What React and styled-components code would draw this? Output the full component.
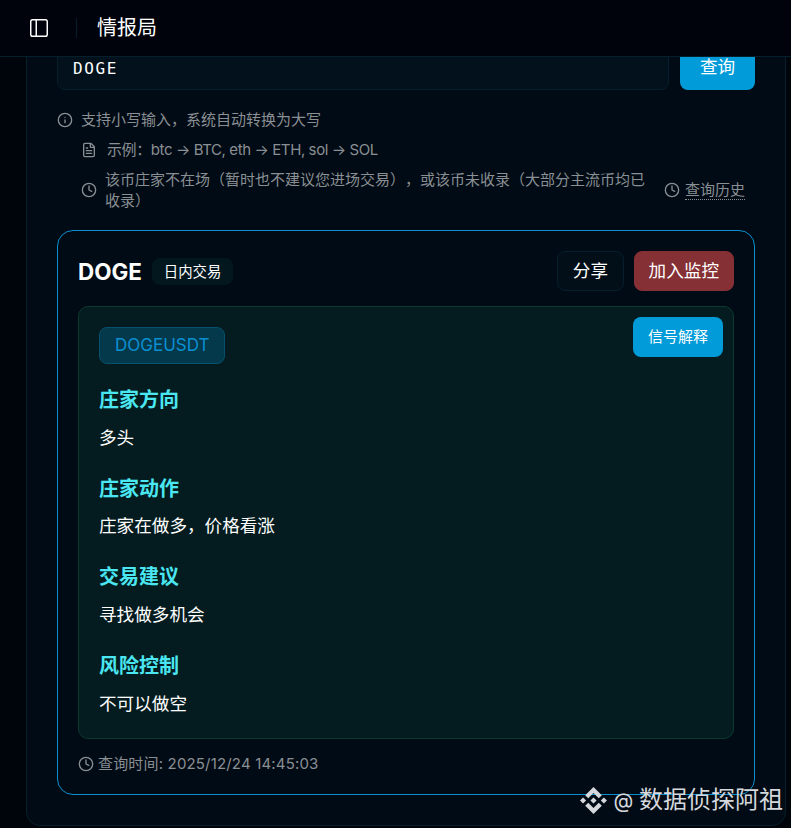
import React from "react";
import styled, { createGlobalStyle } from "styled-components";
import { Info, FileText, Clock, PanelLeft } from "lucide-react";

const GlobalStyle = createGlobalStyle`
  html, body {
    margin: 0;
    height: 100%;
    overflow: hidden;
    background: #00040b;
  }
  * {
    box-sizing: border-box;
  }
  body {
    font-family: Inter, "Noto Sans CJK SC", "Liberation Sans", sans-serif;
    color: #fff;
  }
`;

const Page = styled.div`
  position: relative;
  width: 791px;
  height: 828px;
  overflow: hidden;
`;

const Header = styled.header`
  position: relative;
  z-index: 2;
  display: flex;
  align-items: center;
  height: 57px;
  padding-left: 28px;
  background: #00030c;
  border-bottom: 1px solid #05202c;
`;

const Divider = styled.div`
  width: 1px;
  height: 20px;
  margin: 0 20px 0 26px;
  background: #05202c;
`;

const Title = styled.h1`
  margin: 0;
  font-size: 20px;
  font-weight: 400;
  line-height: 26px;
`;

const Main = styled.main`
  margin: -12px 5px 0 26px;
  height: 781px;
  padding: 0 30px;
  background: #010b15;
  border: 1px solid #05202c;
  border-radius: 0 0 14px 14px;
`;

const SearchRow = styled.div`
  display: flex;
  gap: 11px;
  height: 44px;
`;

const SearchInput = styled.div`
  flex: 1;
  padding-left: 15px;
  line-height: 43px;
  font-family: "DejaVu Sans Mono", "Liberation Mono", monospace;
  font-size: 16px;
  letter-spacing: 1.6px;
  background: #02111c;
  border: 1px solid #05202c;
  border-radius: 8px;
`;

const SearchButton = styled.div`
  width: 75px;
  text-align: center;
  line-height: 42px;
  font-size: 17.6px;
  background: #009bd8;
  border-radius: 8px;
`;

const Hint = styled.div`
  display: flex;
  align-items: center;
  gap: ${(p) => p.$gap || 8}px;
  margin-top: ${(p) => p.$top || 0}px;
  padding-left: ${(p) => p.$indent || 0}px;
  color: #8a8f93;
  font-size: 15px;
  line-height: 21px;
  letter-spacing: ${(p) => p.$tight || 0}px;
  text-spacing-trim: space-all;
  svg {
    flex: none;
  }
`;

const HintText = styled.span`
  width: ${(p) => (p.$wide ? "546px" : "auto")};
`;

const HistoryLink = styled.span`
  display: flex;
  align-items: center;
  gap: 5px;
  margin-left: 5px;
  white-space: nowrap;
  span {
    border-bottom: 1px dotted #8a8f93;
    line-height: 18px;
  }
`;

const ResultCard = styled.section`
  margin-top: 19px;
  height: 565px;
  padding: 20px 20px 0;
  background: #010b15;
  border: 1px solid #0a8fcf;
  border-radius: 16px;
`;

const CardTop = styled.div`
  display: flex;
  align-items: center;
  height: 40px;
`;

const Symbol = styled.h2`
  margin: 0 10px 0 0;
  font-size: 22.4px;
  font-weight: 700;
`;

const Tag = styled.span`
  padding: 0 12px;
  font-size: 14.4px;
  line-height: 27px;
  background: #03171f;
  border-radius: 8px;
`;

const Actions = styled.div`
  display: flex;
  gap: 10px;
  margin-left: auto;
`;

const ActionButton = styled.div`
  height: 40px;
  padding: 0 ${(p) => (p.$danger ? 14 : 14.6)}px;
  line-height: 38px;
  font-size: 17.6px;
  background: ${(p) => (p.$danger ? "#853034" : "#020f18")};
  border: 1px solid ${(p) => (p.$danger ? "#853034" : "#05202c")};
  border-radius: 8px;
`;

const SignalPanel = styled.div`
  position: relative;
  margin-top: 15px;
  height: 433px;
  padding: 20px;
  background: #041c1f;
  border: 1px solid #0b3a2d;
  border-radius: 10px;
`;

const ExplainButton = styled.div`
  position: absolute;
  top: 10px;
  right: 10px;
  width: 90px;
  height: 40px;
  text-align: center;
  line-height: 40px;
  font-size: 15px;
  background: #009bd8;
  border-radius: 8px;
`;

const Pair = styled.span`
  display: inline-block;
  height: 37px;
  padding: 0 15px;
  line-height: 35px;
  font-size: 17px;
  color: #0a8fd2;
  background: #03394b;
  border: 1px solid #07506e;
  border-radius: 8px;
`;

const Section = styled.div`
  margin-top: ${(p) => (p.$first ? 23 : 26.2)}px;
`;

const SectionTitle = styled.h3`
  margin: 0;
  font-size: 20px;
  font-weight: 700;
  line-height: 26px;
  color: #4ae6f1;
`;

const SectionBody = styled.p`
  margin: 11.5px 0 0;
  font-size: 17.6px;
  line-height: 25px;
`;

const QueryTime = styled.div`
  display: flex;
  align-items: center;
  gap: 4px;
  margin-top: 15px;
  color: #8a8f93;
  font-size: 15px;
  letter-spacing: 0.17px;
  line-height: 20px;
`;

const Watermark = styled.div`
  position: absolute;
  right: 8px;
  bottom: 13px;
  z-index: 3;
  display: flex;
  align-items: center;
  gap: 6px;
  color: #d5d8dc;
  font-size: 24px;
  line-height: 28px;
  white-space: nowrap;
`;

const AtSign = styled.span`
  font-size: 20.5px;
`;

const sections = [
  { title: "庄家方向", body: "多头" },
  { title: "庄家动作", body: "庄家在做多，价格看涨" },
  { title: "交易建议", body: "寻找做多机会" },
  { title: "风险控制", body: "不可以做空" },
];

function BinanceMark() {
  return (
    <svg width="27" height="27" viewBox="0 0 126.61 126.61" fill="#d5d8dc">
      <path d="M38.73 53.2l24.59-24.58 24.6 24.6 14.3-14.31L63.32 0 24.43 38.89zM0 63.31l14.3-14.31 14.31 14.31-14.31 14.3zm38.73 10.11l24.59 24.59 24.6-24.6 14.31 14.29-38.9 38.91-38.91-38.88zm59-10.11l14.3-14.31 14.31 14.31-14.31 14.3zM77.83 63.3L63.32 48.78 52.59 59.51l-1.24 1.23-2.54 2.54 14.51 14.5 14.51-14.47z" />
    </svg>
  );
}

export default function App() {
  return (
    <Page>
      <GlobalStyle />
      <Header>
        <PanelLeft size={22} strokeWidth={1.6} />
        <Divider />
        <Title>情报局</Title>
      </Header>
      <Main>
        <SearchRow>
          <SearchInput>DOGE</SearchInput>
          <SearchButton>查询</SearchButton>
        </SearchRow>
        <Hint $top={19}>
          <Info size={16} />
          <span>支持小写输入，系统自动转换为大写</span>
        </Hint>
        <Hint $top={9} $indent={24} $gap={10} $tight={-0.4}>
          <FileText size={16} />
          <span>示例：btc → BTC, eth → ETH, sol → SOL</span>
        </Hint>
        <Hint $top={9} $indent={24}>
          <Clock size={16} />
          <HintText $wide>
            该币庄家不在场（暂时也不建议您进场交易），或该币未收录（大部分主流币均已收录）
          </HintText>
          <HistoryLink>
            <Clock size={16} />
            <span>查询历史</span>
          </HistoryLink>
        </Hint>
        <ResultCard>
          <CardTop>
            <Symbol>DOGE</Symbol>
            <Tag>日内交易</Tag>
            <Actions>
              <ActionButton>分享</ActionButton>
              <ActionButton $danger>加入监控</ActionButton>
            </Actions>
          </CardTop>
          <SignalPanel>
            <ExplainButton>信号解释</ExplainButton>
            <Pair>DOGEUSDT</Pair>
            {sections.map((el, indx) => (
              <Section key={el.title} $first={indx === 0}>
                <SectionTitle>{el.title}</SectionTitle>
                <SectionBody>{el.body}</SectionBody>
              </Section>
            ))}
          </SignalPanel>
          <QueryTime>
            <Clock size={16} />
            <span>查询时间: 2025/12/24 14:45:03</span>
          </QueryTime>
        </ResultCard>
      </Main>
      <Watermark>
        <BinanceMark />
        <span>
          <AtSign>@ </AtSign>数据侦探阿祖
        </span>
      </Watermark>
    </Page>
  );
}
